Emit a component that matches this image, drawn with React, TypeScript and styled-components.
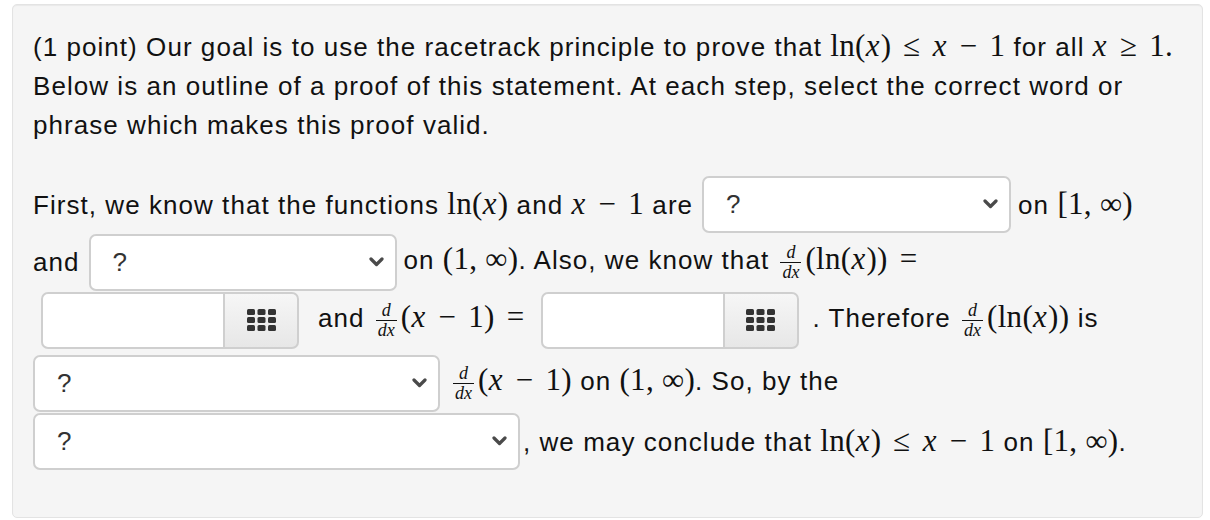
import React from 'react';
import styled, { createGlobalStyle } from 'styled-components';

const GlobalStyle = createGlobalStyle`
  body {
    margin: 0;
    background: #fff;
    font-family: "Liberation Sans", Helvetica, Arial, sans-serif;
    color: #111;
  }
`;

const Page = styled.div`
  padding: 4px 7px 2px 12px;
`;

const Well = styled.div`
  box-sizing: border-box;
  height: 514px;
  background: #f5f5f5;
  border: 1px solid #e3e3e3;
  border-radius: 5px;
  box-shadow: inset 0 1px 1px rgba(0, 0, 0, 0.05);
  padding: 21px 20px;
  font-size: 26px;
  letter-spacing: 1.05px;
`;

const Intro = styled.p`
  margin: 0;
  line-height: 39px;
`;

const Proof = styled.div`
  margin-top: 30px;
  display: flex;
  flex-direction: column;
`;

const Row = styled.div<{ top?: number }>`
  display: flex;
  align-items: center;
  min-height: 58px;
  margin-top: ${p => p.top || 0}px;
  white-space: nowrap;
`;

const Words = styled.span`
  line-height: 30px;
`;

const M = styled.span`
  font-family: "Liberation Serif", "Times New Roman", serif;
  font-size: 31px;
  letter-spacing: 0.3px;
`;

const V = styled.i`
  font-family: "Liberation Serif", "Times New Roman", serif;
  font-style: italic;
  margin-right: 1px;
`;

const Op = styled.span`
  margin: 0 12px;
`;

const Frac = styled.span`
  display: inline-flex;
  flex-direction: column;
  align-items: center;
  vertical-align: middle;
  font-family: "Liberation Serif", "Times New Roman", serif;
  font-style: italic;
  font-size: 18px;
  letter-spacing: 0;
  margin: 0 4px 0 3px;
`;

const FracPart = styled.span`
  line-height: 19px;
  padding: 0 2px;
`;

const FracBar = styled.span`
  align-self: stretch;
  border-top: 1px solid #111;
`;

const SelectBox = styled.div<{ w: number; ml?: number; mr?: number }>`
  box-sizing: border-box;
  width: ${p => p.w}px;
  height: 57px;
  margin: 0 ${p => (p.mr === undefined ? 7 : p.mr)}px 0 ${p => (p.ml === undefined ? 9 : p.ml)}px;
  flex: none;
  display: flex;
  align-items: center;
  justify-content: space-between;
  padding: 0 11px 0 22px;
  background: #fff;
  border: 2px solid #cfcfcf;
  border-radius: 7px;
  color: #333;
  font-size: 26px;
  letter-spacing: 0;
`;

const InputGroup = styled.div<{ ml: number; mr: number }>`
  display: flex;
  flex: none;
  height: 57px;
  margin: 0 ${p => p.mr}px 0 ${p => p.ml}px;
`;

const TextInput = styled.input`
  box-sizing: border-box;
  width: 184px;
  height: 100%;
  margin: 0;
  background: #fff;
  border: 2px solid #cfcfcf;
  border-radius: 7px 0 0 7px;
  outline: none;
`;

const PadButton = styled.button`
  box-sizing: border-box;
  width: 74px;
  height: 100%;
  margin: 0;
  display: flex;
  align-items: center;
  justify-content: center;
  background: linear-gradient(to bottom, #f6f6f6, #e7e7e7);
  border: 2px solid #cfcfcf;
  border-left: none;
  border-radius: 0 7px 7px 0;
  padding: 0;
`;

const Chevron = () => (
  <svg width="15" height="10" viewBox="0 0 15 10">
    <path d="M2 2 L7.5 7.5 L13 2" fill="none" stroke="#4a4a4a" strokeWidth="3.2" strokeLinecap="round" strokeLinejoin="round" />
  </svg>
);

const GridIcon = () => (
  <svg width="29" height="22" viewBox="0 0 29 22">
    {[0, 1, 2].map(r =>
      [0, 1, 2].map(c => (
        <rect key={`${r}-${c}`} x={c * 10.5} y={r * 8} width="8" height="6" rx="1.5" fill="#333" />
      ))
    )}
  </svg>
);

const Select = ({ w, ml, mr }: { w: number; ml?: number; mr?: number }) => (
  <SelectBox w={w} ml={ml} mr={mr}>
    <span>?</span>
    <Chevron />
  </SelectBox>
);

const AnswerInput = ({ ml, mr }: { ml: number; mr: number }) => (
  <InputGroup ml={ml} mr={mr}>
    <TextInput type="text" />
    <PadButton type="button">
      <GridIcon />
    </PadButton>
  </InputGroup>
);

const DDx = () => (
  <Frac>
    <FracPart>d</FracPart>
    <FracBar />
    <FracPart>dx</FracPart>
  </Frac>
);

const LnX = () => (
  <M>
    ln(<V>x</V>)
  </M>
);

const XMinus1 = () => (
  <M>
    <V>x</V>
    <Op>−</Op>1
  </M>
);

const LnLeq = () => (
  <M>
    ln(<V>x</V>)<Op>≤</Op>
    <V>x</V>
    <Op>−</Op>1
  </M>
);

const App = () => {
  return (
    <Page>
      <GlobalStyle />
      <Well>
        <Intro>
          (1 point) Our goal is to use the racetrack principle to prove that <LnLeq /> for all{' '}
          <M>
            <V>x</V>
            <Op>≥</Op>1.
          </M>
          <br />
          Below is an outline of a proof of this statement. At each step, select the correct word or
          <br />
          phrase which makes this proof valid.
        </Intro>
        <Proof>
          <Row>
            <Words>
              First, we know that the functions <LnX /> and <XMinus1 /> are
            </Words>
            <Select w={309} />
            <Words>
              on <M>[1, ∞)</M>
            </Words>
          </Row>
          <Row>
            <Words>and</Words>
            <Select w={308} />
            <Words>
              on <M>(1, ∞)</M>. Also, we know that <DDx />
              <M>
                (ln(<V>x</V>))<Op>=</Op>
              </M>
            </Words>
          </Row>
          <Row>
            <AnswerInput ml={8} mr={19} />
            <Words>
              and <DDx />
              <M>
                (<V>x</V>
                <Op>−</Op>1)<Op>=</Op>
              </M>
            </Words>
            <AnswerInput ml={4} mr={14} />
            <Words>
              . Therefore <DDx />
              <M>
                (ln(<V>x</V>))
              </M>{' '}
              is
            </Words>
          </Row>
          <Row top={5}>
            <Select w={407} ml={0} mr={10} />
            <Words>
              <DDx />
              <M>
                (<V>x</V>
                <Op>−</Op>1)
              </M>{' '}
              on <M>(1, ∞)</M>. So, by the
            </Words>
          </Row>
          <Row>
            <Select w={487} ml={0} mr={3} />
            <Words>
              , we may conclude that <LnLeq /> on <M>[1, ∞)</M>.
            </Words>
          </Row>
        </Proof>
      </Well>
    </Page>
  );
};

export default App;
